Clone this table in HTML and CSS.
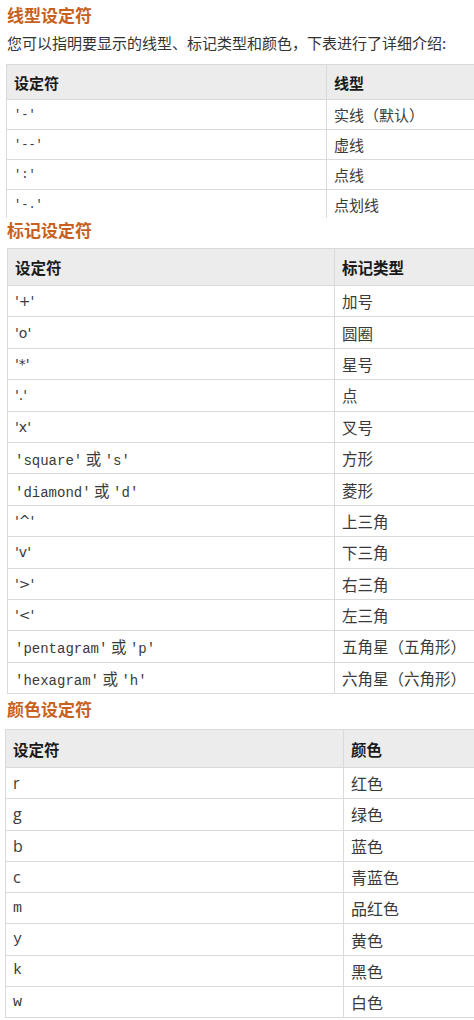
FILE: index.html
```html
<!DOCTYPE html>
<html lang="zh-CN">
<head>
<meta charset="utf-8">
<title>线型、标记、颜色设定符</title>
<link rel="stylesheet" href="styles.css">
</head>
<body>
<section class="sec sec-line">
  <h2 class="title">线型设定符</h2>
  <p class="intro">您可以指明要显示的线型、标记类型和颜色，下表进行了详细介绍:</p>
  <table class="spec t1">
    <colgroup><col class="c1"><col></colgroup>
    <thead><tr><th>设定符</th><th>线型</th></tr></thead>
    <tbody>
      <tr><td class="mono">'-'</td><td>实线（默认）</td></tr>
      <tr><td class="mono">'--'</td><td>虚线</td></tr>
      <tr><td class="mono">':'</td><td>点线</td></tr>
      <tr><td class="mono">'-.'</td><td>点划线</td></tr>
    </tbody>
  </table>
</section>

<section class="sec sec-marker">
  <h2 class="title">标记设定符</h2>
  <table class="spec t2">
    <colgroup><col class="c1"><col></colgroup>
    <thead><tr><th>设定符</th><th>标记类型</th></tr></thead>
    <tbody>
      <tr><td class="sans">'+'</td><td>加号</td></tr>
      <tr><td class="sans">'o'</td><td>圆圈</td></tr>
      <tr><td class="sans">'*'</td><td>星号</td></tr>
      <tr><td class="sans">'.'</td><td>点</td></tr>
      <tr><td class="sans">'x'</td><td>叉号</td></tr>
      <tr><td><span class="mono">'square'</span> 或 <span class="mono">'s'</span></td><td>方形</td></tr>
      <tr><td><span class="mono">'diamond'</span> 或 <span class="mono">'d'</span></td><td>菱形</td></tr>
      <tr><td class="sans">'^'</td><td>上三角</td></tr>
      <tr><td class="sans">'v'</td><td>下三角</td></tr>
      <tr><td class="sans">'&gt;'</td><td>右三角</td></tr>
      <tr><td class="sans">'&lt;'</td><td>左三角</td></tr>
      <tr><td><span class="mono">'pentagram'</span> 或 <span class="mono">'p'</span></td><td>五角星（五角形）</td></tr>
      <tr><td><span class="mono">'hexagram'</span> 或 <span class="mono">'h'</span></td><td>六角星（六角形）</td></tr>
    </tbody>
  </table>
</section>

<section class="sec sec-color">
  <h2 class="title">颜色设定符</h2>
  <table class="spec t3">
    <colgroup><col class="c1"><col></colgroup>
    <thead><tr><th>设定符</th><th>颜色</th></tr></thead>
    <tbody>
      <tr><td class="sans">r</td><td>红色</td></tr>
      <tr><td class="sans">g</td><td>绿色</td></tr>
      <tr><td class="sans">b</td><td>蓝色</td></tr>
      <tr><td class="sans">c</td><td>青蓝色</td></tr>
      <tr><td class="mono">m</td><td>品红色</td></tr>
      <tr><td class="mono">y</td><td>黄色</td></tr>
      <tr><td class="mono">k</td><td>黑色</td></tr>
      <tr><td class="mono">w</td><td>白色</td></tr>
    </tbody>
  </table>
</section>
</body>
</html>
```

FILE: styles.css
```css
html, body {
  margin: 0;
  padding: 0;
  background: #ffffff;
  overflow: hidden;
}

body {
  width: 474px;
  font-family: "Noto Sans CJK SC", "Noto Sans", sans-serif;
  color: #333333;
}

.sec {
  overflow: hidden;
  background: #ffffff;
}

.title {
  margin: 0;
  padding-left: 7px;
  font-size: 17px;
  line-height: 24px;
  font-weight: 700;
  color: #c8601e;
}

.intro {
  margin: 4px 0 0;
  padding-left: 7px;
  font-size: 15px;
  line-height: 24px;
  color: #333333;
  white-space: nowrap;
}

.spec {
  border-collapse: collapse;
  table-layout: fixed;
  width: 520px;
}

.spec th,
.spec td {
  border: 1px solid #dadada;
  text-align: left;
  padding: 0 0 0 7px;
  white-space: nowrap;
  vertical-align: middle;
}

.spec th {
  background: #ececec;
  color: #1a1a1a;
  font-weight: 700;
}

.spec td {
  color: #3a3a3a;
  font-weight: 400;
}

.mono {
  font-family: "Liberation Mono", "DejaVu Sans Mono", monospace;
  font-size: 13px;
}

.sans {
  font-family: "DejaVu Sans", "Noto Sans", sans-serif;
}

/* section 1: line styles */
.sec-line {
  height: 218px;
  padding-top: 3px;
  box-sizing: border-box;
}

.t1 {
  margin: 9px 0 0 6px;
}

.t1 .c1 { width: 320px; }

.t1 th {
  font-size: 15px;
  height: 34px;
}

.t1 td {
  font-size: 15px;
  height: 29px;
}

.t1 td.mono { font-size: 12px; }

/* section 2: markers */
.sec-marker {
  height: 478px;
  box-shadow: 0 1px 1px rgba(0,0,0,0.08);
}

.t2 {
  margin: 6px 0 0 7px;
}

.t2 .c1 { width: 327px; }

.t2 th {
  font-size: 15.5px;
  height: 36px;
}

.t2 td {
  font-size: 15.5px;
  height: 30.4px;
}

.t2 td.sans { font-size: 14px; }
.t2 .mono { font-size: 14px; }

/* section 3: colors */
.sec-color {
  padding-top: 1px;
}

.t3 {
  margin: 8px 0 0 5px;
}

.t3 .c1 { width: 338px; }

.t3 th {
  font-size: 15.5px;
  height: 37px;
}

.t3 td {
  font-size: 16px;
  height: 30.3px;
}

.t3 td.sans { font-size: 16px; font-family: "Open Sans", "Noto Sans", sans-serif; }
.t3 td.mono { font-size: 15px; }
```
